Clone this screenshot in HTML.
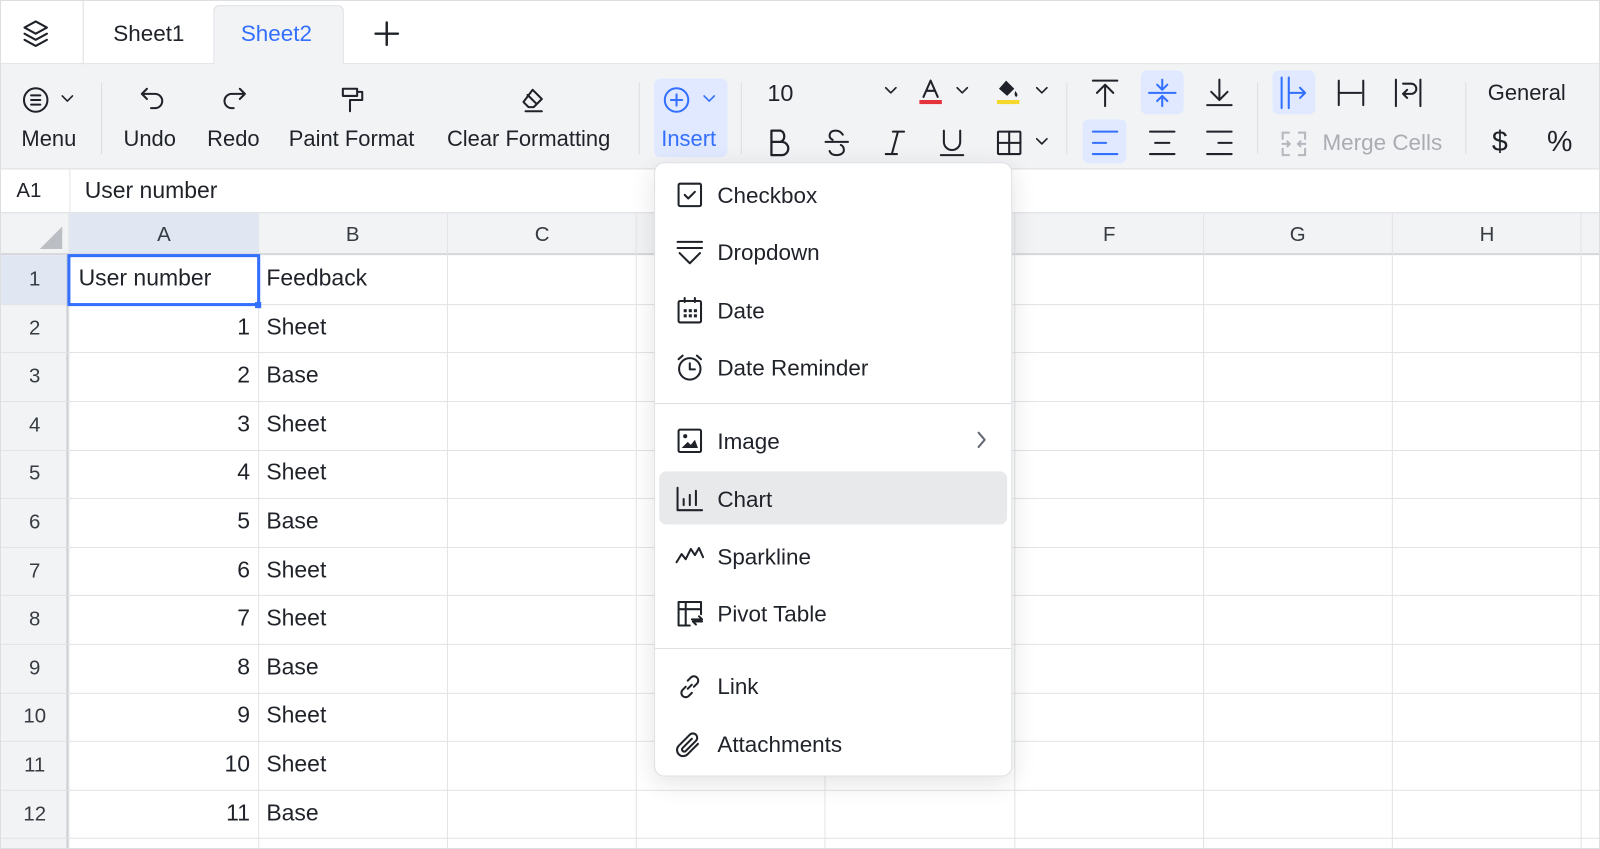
<!DOCTYPE html>
<html><head><meta charset="utf-8"><style>
*{box-sizing:border-box;margin:0;padding:0}
html,body{width:1600px;height:848px;overflow:hidden;background:#fff}
body{font-family:"Liberation Sans",sans-serif;color:#1f2329}
#w{position:absolute;left:0;top:0;width:1568px;height:832px;transform:scale(1.020408);transform-origin:0 0;border:1px solid #dcdee1;background:#fff;overflow:hidden}
.a{position:absolute}
.t{position:absolute;white-space:nowrap}
svg{position:absolute;overflow:visible}
.ic{fill:none;stroke:#1f2329;stroke-width:2;stroke-linecap:round;stroke-linejoin:round}
.bl{stroke:#3370ff}
.lbl{font-size:21.5px;position:absolute;white-space:nowrap}
.hl{position:absolute;left:0;width:1568px;height:1px;background:#e2e3e5}
.vl{position:absolute;top:207px;width:1px;height:630px;background:#e2e3e5}
.rn{position:absolute;left:0;width:66px;text-align:center;font-size:20px;color:#373c43}
.cell{position:absolute;font-size:22.5px}
.mi{position:absolute;left:702px;font-size:22px;color:#1f2329;white-space:nowrap}
</style></head><body><div id="w">
<div class="a" style="left:0;top:0;width:1568px;height:62px;border-bottom:1px solid #dcdee1"></div>
<div class="a" style="left:80px;top:0;width:1px;height:62px;background:#dcdee1"></div>
<svg style="left:20px;top:18px" width="28" height="28"><path class="ic" d="M14 2 L25 8 L14 14 L3 8 Z M3 14 L14 20 L25 14 M3 20 L14 26 L25 20"/></svg>
<div class="t" style="left:110px;top:19px;font-size:22px">Sheet1</div>
<div class="a" style="left:208px;top:4px;width:128px;height:59px;background:#f2f3f5;border:1px solid #dcdee1;border-bottom:none;border-radius:6px 6px 0 0"></div>
<div class="t" style="left:235px;top:19px;font-size:22px;color:#3370ff">Sheet2</div>
<svg style="left:366px;top:20px" width="24" height="24"><path class="ic" d="M12 1V23M1 12H23" style="stroke-width:2.4"/></svg>
<div class="a" style="left:0;top:62px;width:1568px;height:103px;background:#f2f3f5;border-bottom:1px solid #dcdee1"></div>
<svg style="left:21px;top:84px" width="26" height="26"><circle class="ic" cx="13" cy="13" r="11.5"/><path class="ic" d="M8.5 8.5H17.5M8.5 13H17.5M8.5 17.5H17.5"/></svg>
<svg style="left:59px;top:92px" width="12" height="8"><path class="ic" d="M1 1L6 6L11 1" style="stroke-width:1.6"/></svg>
<div class="lbl" style="left:20px;top:123px">Menu</div>
<div class="a" style="left:98px;top:80px;width:1px;height:70px;background:#dcdee1"></div>
<svg style="left:136px;top:84px" width="26" height="26"><path class="ic" d="M7 2L2 7L7 12M2 7H15A7 7 0 0 1 15 21H11"/></svg>
<div class="lbl" style="left:120px;top:123px">Undo</div>
<svg style="left:215px;top:84px" width="26" height="26"><path class="ic" d="M19 2L24 7L19 12M24 7H11A7 7 0 0 0 11 21H13"/></svg>
<div class="lbl" style="left:202px;top:123px">Redo</div>
<svg style="left:332px;top:84px" width="26" height="28"><path class="ic" d="M3 2H17V9H3Z M17 5H22V13H10V24"/></svg>
<div class="lbl" style="left:282px;top:123px">Paint Format</div>
<svg style="left:506px;top:84px" width="28" height="28"><path class="ic" d="M15 3L24 12L16 20H11L6 15Z M10 8L19 17 M8 24H24"/></svg>
<div class="lbl" style="left:437px;top:123px">Clear Formatting</div>
<div class="a" style="left:625px;top:80px;width:1px;height:70px;background:#dcdee1"></div>
<div class="a" style="left:640px;top:76px;width:72px;height:77px;background:#e0e9ff;border-radius:6px"></div>
<svg style="left:649px;top:84px" width="26" height="26"><circle class="ic bl" cx="13" cy="13" r="11.5"/><path class="ic bl" d="M13 7.5V18.5M7.5 13H18.5"/></svg>
<svg style="left:688px;top:92px" width="12" height="8"><path class="ic bl" d="M1 1L6 6L11 1" style="stroke-width:1.6"/></svg>
<div class="lbl" style="left:647px;top:123px;color:#3370ff">Insert</div>
<div class="a" style="left:725px;top:80px;width:1px;height:70px;background:#dcdee1"></div>
<div class="t" style="left:751px;top:77px;font-size:23px">10</div>
<svg style="left:866px;top:84px" width="12" height="8"><path class="ic" d="M1 1L6 6L11 1" style="stroke-width:1.6"/></svg>
<svg style="left:900px;top:76px" width="24" height="28"><path class="ic" d="M4 18L11 2L18 18M7 12H15"/><rect x="0" y="21" width="22" height="4" fill="#e5333b"/></svg>
<svg style="left:936px;top:84px" width="12" height="8"><path class="ic" d="M1 1L6 6L11 1" style="stroke-width:1.6"/></svg>
<svg style="left:975px;top:76px" width="26" height="28"><path d="M10 2L18 10L11 17L3 10Z" fill="#1f2329"/><path d="M19 12C21 15 22 16 20 18C18 17 18 15 19 12Z" fill="#1f2329"/><rect x="1" y="21" width="22" height="4" fill="#f4d82e"/></svg>
<svg style="left:1014px;top:84px" width="12" height="8"><path class="ic" d="M1 1L6 6L11 1" style="stroke-width:1.6"/></svg>
<svg style="left:752px;top:125px" width="22" height="28"><path class="ic" d="M3 2H12A6 6 0 0 1 12 13H3ZM3 13H13A6.5 6.5 0 0 1 13 26H3Z" style="stroke-width:2.2"/></svg>
<svg style="left:807px;top:126px" width="24" height="26"><path class="ic" d="M18 5C16 2 13 1 11 1C7 1 5 3 5 6C5 8 6 9 8 10 M1 12H23 M16 15C18 16 19 18 19 20C19 23 16 25 12 25C9 25 6 24 5 21"/></svg>
<svg style="left:865px;top:127px" width="22" height="24"><path class="ic" d="M9 1H20M2 23H13M14 1L8 23"/></svg>
<svg style="left:920px;top:125px" width="24" height="28"><path class="ic" d="M4 2V13A8 8 0 0 0 20 13V2M1 26H23"/></svg>
<svg style="left:976px;top:127px" width="24" height="24"><rect class="ic" x="1" y="1" width="22" height="22" rx="1"/><path class="ic" d="M12 1V23M1 12H23"/></svg>
<svg style="left:1014px;top:134px" width="12" height="8"><path class="ic" d="M1 1L6 6L11 1" style="stroke-width:1.6"/></svg>
<div class="a" style="left:1044px;top:80px;width:1px;height:70px;background:#dcdee1"></div>
<svg style="left:1069px;top:76px" width="26" height="28"><path class="ic" d="M1 2H25M13 27V7M5 14L13 6L21 14"/></svg>
<div class="a" style="left:1117px;top:68px;width:42px;height:43px;background:#e0e9ff;border-radius:6px"></div>
<svg style="left:1124px;top:76px" width="28" height="28"><path class="ic bl" d="M1 14H27M14 1V11M9 6L14 11L19 6M14 27V17M9 22L14 17L19 22"/></svg>
<svg style="left:1181px;top:76px" width="26" height="28"><path class="ic" d="M1 26H25M13 1V21M5 13L13 21L21 13"/></svg>
<div class="a" style="left:1060px;top:116px;width:43px;height:43px;background:#e0e9ff;border-radius:6px"></div>
<svg style="left:1069px;top:126px" width="26" height="26"><path class="ic bl" d="M1 2H25M1 13H14M1 24H25"/></svg>
<svg style="left:1125px;top:126px" width="26" height="26"><path class="ic" d="M1 2H25M6 13H20M1 24H25"/></svg>
<svg style="left:1181px;top:126px" width="26" height="26"><path class="ic" d="M1 2H25M12 13H25M1 24H25"/></svg>
<div class="a" style="left:1231px;top:80px;width:1px;height:70px;background:#dcdee1"></div>
<div class="a" style="left:1246px;top:68px;width:42px;height:43px;background:#e0e9ff;border-radius:6px"></div>
<svg style="left:1253px;top:74px" width="28" height="32"><path class="ic bl" d="M2 1V31M9 1V31M9 16H25M20 11L25 16L20 21"/></svg>
<svg style="left:1309px;top:77px" width="28" height="26"><path class="ic" d="M2 1V25M26 1V25M2 13H24"/></svg>
<svg style="left:1365px;top:76px" width="28" height="28"><path class="ic" d="M2 1V27M26 1V27M9 5H17A5 5 0 0 1 17 15H9M13 11L9 15L13 19"/></svg>
<svg style="left:1254px;top:127px" width="26" height="26"><path d="M2 9V2H9M17 2H24V9M24 17V24H17M9 24H2V17M1 13H9M6 10L9 13L6 16M25 13H17M20 10L17 13L20 16" fill="none" stroke="#b4b7bd" stroke-width="2"/></svg>
<div class="lbl" style="left:1295px;top:126px;color:#a9acb2;font-size:22px">Merge Cells</div>
<div class="a" style="left:1435px;top:80px;width:1px;height:70px;background:#dcdee1"></div>
<div class="t" style="left:1457px;top:78px;font-size:21.5px">General</div>
<div class="t" style="left:1461px;top:122px;font-size:28px">$</div>
<div class="t" style="left:1515px;top:122px;font-size:28px">%</div>
<div class="t" style="left:15px;top:175px;font-size:20px">A1</div>
<div class="a" style="left:67px;top:165px;width:1px;height:42px;background:#e2e3e5"></div>
<div class="t" style="left:82px;top:173px;font-size:22.5px">User number</div>
<div class="a" style="left:0;top:207px;width:1568px;height:42px;background:#f2f3f5;border-top:1px solid #dcdee1;border-bottom:2px solid #d6d8db"></div>
<div class="a" style="left:67px;top:208px;width:185px;height:39px;background:#e1e7f2"></div>
<div class="a" style="left:0;top:249px;width:66px;height:590px;background:#f2f3f5;border-right:2px solid #cfd1d5"></div>
<div class="a" style="left:0;top:249px;width:66px;height:48px;background:#e1e7f2;border-right:2px solid #cfd1d5"></div>
<svg style="left:38px;top:221px" width="24" height="22"><path d="M22 0V22H0Z" fill="#bbbfc4"/></svg>
<div class="vl" style="left:66px"></div><div class="vl" style="left:252px"></div><div class="vl" style="left:437px"></div><div class="vl" style="left:622px"></div><div class="vl" style="left:807px"></div><div class="vl" style="left:993px"></div><div class="vl" style="left:1178px"></div><div class="vl" style="left:1363px"></div><div class="vl" style="left:1548px"></div>
<div class="t" style="left:153px;top:218px;font-size:20px;color:#373c43">A</div>
<div class="t" style="left:338px;top:218px;font-size:20px;color:#373c43">B</div>
<div class="t" style="left:523px;top:218px;font-size:20px;color:#373c43">C</div>
<div class="t" style="left:1080px;top:218px;font-size:20px;color:#373c43">F</div>
<div class="t" style="left:1263px;top:218px;font-size:20px;color:#373c43">G</div>
<div class="t" style="left:1449px;top:218px;font-size:20px;color:#373c43">H</div>
<div class="hl" style="top:297px"></div><div class="hl" style="top:344px"></div><div class="hl" style="top:392px"></div><div class="hl" style="top:440px"></div><div class="hl" style="top:487px"></div><div class="hl" style="top:535px"></div><div class="hl" style="top:582px"></div><div class="hl" style="top:630px"></div><div class="hl" style="top:678px"></div><div class="hl" style="top:725px"></div><div class="hl" style="top:773px"></div><div class="hl" style="top:820px"></div>
<div class="rn" style="top:262px">1</div><div class="rn" style="top:310px">2</div><div class="rn" style="top:357px">3</div><div class="rn" style="top:405px">4</div><div class="rn" style="top:452px">5</div><div class="rn" style="top:500px">6</div><div class="rn" style="top:548px">7</div><div class="rn" style="top:595px">8</div><div class="rn" style="top:643px">9</div><div class="rn" style="top:690px">10</div><div class="rn" style="top:738px">11</div><div class="rn" style="top:786px">12</div>
<div class="a" style="left:65px;top:248px;width:189px;height:51px;border:3px solid #3370ff;background:#fff"></div>
<div class="a" style="left:249px;top:295px;width:6px;height:6px;background:#3370ff"></div>
<div class="cell" style="left:76px;top:259px">User number</div>
<div class="cell" style="left:260px;top:259px">Feedback</div>
<div class="cell" style="left:150px;width:94px;text-align:right;top:307px">1</div><div class="cell" style="left:260px;top:307px">Sheet</div>
<div class="cell" style="left:150px;width:94px;text-align:right;top:354px">2</div><div class="cell" style="left:260px;top:354px">Base</div>
<div class="cell" style="left:150px;width:94px;text-align:right;top:402px">3</div><div class="cell" style="left:260px;top:402px">Sheet</div>
<div class="cell" style="left:150px;width:94px;text-align:right;top:449px">4</div><div class="cell" style="left:260px;top:449px">Sheet</div>
<div class="cell" style="left:150px;width:94px;text-align:right;top:497px">5</div><div class="cell" style="left:260px;top:497px">Base</div>
<div class="cell" style="left:150px;width:94px;text-align:right;top:545px">6</div><div class="cell" style="left:260px;top:545px">Sheet</div>
<div class="cell" style="left:150px;width:94px;text-align:right;top:592px">7</div><div class="cell" style="left:260px;top:592px">Sheet</div>
<div class="cell" style="left:150px;width:94px;text-align:right;top:640px">8</div><div class="cell" style="left:260px;top:640px">Base</div>
<div class="cell" style="left:150px;width:94px;text-align:right;top:687px">9</div><div class="cell" style="left:260px;top:687px">Sheet</div>
<div class="cell" style="left:150px;width:94px;text-align:right;top:735px">10</div><div class="cell" style="left:260px;top:735px">Sheet</div>
<div class="cell" style="left:150px;width:94px;text-align:right;top:783px">11</div><div class="cell" style="left:260px;top:783px">Base</div>
<div class="a" style="left:640px;top:158px;width:351px;height:602px;background:#fff;border:1px solid #dee0e3;border-radius:10px;box-shadow:0 6px 24px rgba(31,35,41,.12)"></div>
<div class="a" style="left:641px;top:394px;width:349px;height:1px;background:#dee0e3"></div>
<div class="a" style="left:641px;top:634px;width:349px;height:1px;background:#dee0e3"></div>
<div class="a" style="left:645px;top:461px;width:341px;height:52px;background:#e8e9eb;border-radius:7px"></div>
<svg style="left:663px;top:178px" width="24" height="24"><rect class="ic" x="1" y="1" width="22" height="22" rx="1.5"/><path class="ic" d="M7 12L10.5 15.5L17 9"/></svg>
<div class="mi" style="top:178px">Checkbox</div>
<svg style="left:662px;top:234px" width="26" height="26"><path class="ic" d="M1 2H25M1 8H25M3 13L13 23L23 13"/></svg>
<div class="mi" style="top:234px">Dropdown</div>
<svg style="left:663px;top:290px" width="24" height="26"><rect class="ic" x="1" y="4" width="22" height="21" rx="1.5"/><path class="ic" d="M7 1V5M17 1V5"/><g fill="#1f2329"><rect x="6" y="12" width="3" height="3"/><rect x="11" y="12" width="3" height="3"/><rect x="16" y="12" width="3" height="3"/><rect x="6" y="17" width="3" height="3"/><rect x="11" y="17" width="3" height="3"/><rect x="16" y="17" width="3" height="3"/></g></svg>
<div class="mi" style="top:291px">Date</div>
<svg style="left:662px;top:346px" width="26" height="26"><circle class="ic" cx="13" cy="14.5" r="10.5"/><path class="ic" d="M13 9V15H18M2 5L6 1.5M24 5L20 1.5"/></svg>
<div class="mi" style="top:347px">Date Reminder</div>
<svg style="left:663px;top:419px" width="24" height="24"><rect class="ic" x="1" y="1" width="22" height="22" rx="1.5"/><circle cx="7.5" cy="7.5" r="2" fill="#1f2329"/><path d="M4 19L10 13L13 16L17 11L20 19Z" fill="#1f2329"/></svg>
<div class="mi" style="top:419px">Image</div>
<svg style="left:956px;top:422px" width="10" height="16"><path d="M2 1L8 8L2 15" fill="none" stroke="#646a73" stroke-width="2" stroke-linecap="round" stroke-linejoin="round"/></svg>
<svg style="left:662px;top:476px" width="26" height="24"><path class="ic" d="M1 1V23H25M7 12V18M13 8V18M19 4V18"/></svg>
<div class="mi" style="top:476px">Chart</div>
<svg style="left:661px;top:533px" width="28" height="20"><path class="ic" d="M1 17L6 9L10 14L15 4L19 10L23 3L27 12"/></svg>
<div class="mi" style="top:532px">Sparkline</div>
<svg style="left:663px;top:588px" width="26" height="26"><path class="ic" d="M23 13V1H1V24H12M1 8H23M8 1V24M14 18H24L21 15M24 20H15L18 23"/></svg>
<div class="mi" style="top:588px">Pivot Table</div>
<svg style="left:663px;top:659px" width="24" height="26"><path class="ic" d="M10 15L14 11M8 13L5 16A4 4 0 0 0 11 22L14 19M16 13L19 10A4 4 0 0 0 13 4L10 7"/></svg>
<div class="mi" style="top:659px">Link</div>
<svg style="left:661px;top:716px" width="26" height="26"><path class="ic" d="M22 12L12 22A6 6 0 0 1 3 14L14 3A4 4 0 0 1 20 9L10 19A2 2 0 0 1 7 16L16 7"/></svg>
<div class="mi" style="top:716px">Attachments</div>
</div></body></html>
